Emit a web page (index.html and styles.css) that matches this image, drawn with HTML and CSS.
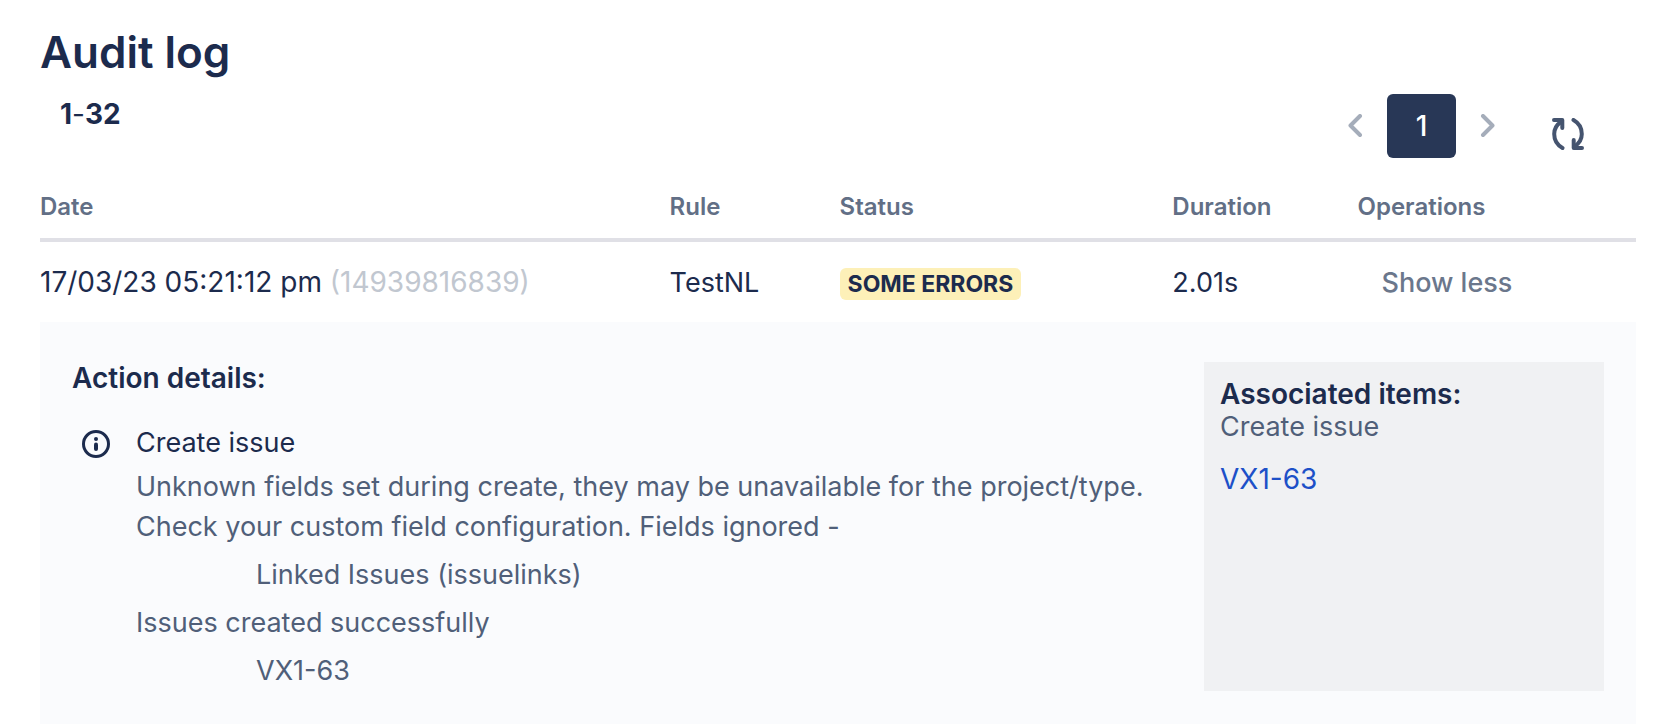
FILE: index.html
```html
<!DOCTYPE html>
<html lang="en">
<head>
  <meta charset="UTF-8">
  <meta name="viewport" content="width=device-width, initial-scale=1">
  <title>Audit log</title>
  <link rel="stylesheet" href="styles.css">
</head>
<body>
  <main class="page">
    <h1>Audit log</h1>

    <div class="toolbar">
      <div class="range"><strong>1</strong>-<strong>32</strong></div>
      <nav class="pager" aria-label="Pagination">
        <button class="arrow" aria-label="Previous page">
          <svg width="16" height="24" viewBox="0 0 16 24"><path d="M13 2 3.500 11.500 13 21"/></svg>
        </button>
        <button class="current">1</button>
        <button class="arrow" aria-label="Next page">
          <svg width="16" height="24" viewBox="0 0 16 24"><path d="M3 2l9.500 9.500L3 21"/></svg>
        </button>
      </nav>
      <button class="refresh" aria-label="Refresh">
        <svg width="32" height="32" viewBox="0 0 32 32">
          <path d="M2 2h8.300v8"/>
          <path d="M9.500 3.500C5 6.500 2.200 11 2.200 16c0 6 3 11 8.300 14"/>
          <path d="M30 30h-8.300v-8"/>
          <path d="M22.500 28.500c4.500-3 7.300-7.500 7.300-12.500 0-6-3-11-8.300-14"/>
        </svg>
      </button>
    </div>

    <table class="log">
      <thead>
        <tr>
          <th class="col-date">Date</th>
          <th class="col-rule">Rule</th>
          <th class="col-status">Status</th>
          <th class="col-duration">Duration</th>
          <th>Operations</th>
        </tr>
      </thead>
      <tbody>
        <tr class="entry">
          <td class="date">17/03/23 05:21:12 pm <span class="entry-id">(14939816839)</span></td>
          <td>TestNL</td>
          <td><span class="badge">SOME ERRORS</span></td>
          <td>2.01s</td>
          <td><button class="toggle">Show less</button></td>
        </tr>
        <tr>
          <td class="details-cell" colspan="5">
            <div class="details">
              <section class="actions">
                <h2>Action details:</h2>
                <div class="action">
                  <svg class="info" width="28" height="28" viewBox="0 0 28 28">
                    <circle cx="14" cy="14" r="12.500"/>
                    <circle class="dot" cx="14" cy="9" r="2"/>
                    <path class="stem" d="M14 14.500v4.500"/>
                  </svg>
                  <div class="action-body">
                    <h3>Create issue</h3>
                    <p>Unknown fields set during create, they may be unavailable for the project/type. Check your custom field configuration. Fields ignored -</p>
                    <p class="nested">Linked Issues (issuelinks)</p>
                    <p>Issues created successfully</p>
                    <p class="nested">VX1-63</p>
                  </div>
                </div>
              </section>
              <aside class="items">
                <h2>Associated items:</h2>
                <p>Create issue</p>
                <a href="#">VX1-63</a>
              </aside>
            </div>
          </td>
        </tr>
      </tbody>
    </table>
  </main>
</body>
</html>
```

FILE: styles.css
```css
* {
  box-sizing: border-box;
}

body {
  margin: 0;
  background: #fff;
  color: #1c2b4d;
  font-family: Inter, "Liberation Sans", sans-serif;
  font-size: 27px;
  line-height: 32px;
}

h1, h2, h3, p {
  margin: 0;
}

button {
  padding: 0;
  border: none;
  background: none;
  font: inherit;
  cursor: pointer;
}

svg {
  display: block;
  fill: none;
  stroke: currentColor;
  stroke-width: 4;
  stroke-linecap: round;
  stroke-linejoin: round;
}

.page {
  padding: 24px 22px 0 40px;
}

h1 {
  margin-bottom: 14px;
  font-size: 44px;
  font-weight: 600;
  line-height: 56px;
}

/* range, pager and refresh */
.toolbar {
  display: flex;
  align-items: flex-start;
  margin-bottom: 16px;
  padding-right: 36px;
}

.range {
  flex: 1;
  padding: 4px 20px;
  font-size: 28px;
}

.pager {
  display: flex;
}

.pager button {
  display: flex;
  align-items: center;
  justify-content: center;
  width: 64px;
  height: 64px;
}

.pager .arrow {
  color: #a5adba;
}

.pager .current {
  width: 69px;
  border-radius: 6px;
  background: #283756;
  color: #fff;
  font-size: 28px;
  font-weight: 500;
}

.refresh {
  display: flex;
  align-items: center;
  justify-content: center;
  width: 64px;
  height: 80px;
  margin-left: 16px;
  color: #45546f;
}

/* log table */
.log {
  width: 100%;
  border-spacing: 0;
  table-layout: fixed;
}

.log th {
  padding: 0 0 14px;
  border-bottom: 4px solid #e0e0e6;
  color: #626f86;
  font-size: 24px;
  font-weight: 600;
  line-height: 34px;
  text-align: left;
}

.col-date {
  width: 39.450%;
}

.col-rule {
  width: 10.650%;
}

.col-status {
  width: 20.850%;
}

.col-duration {
  width: 11.600%;
}

.entry td {
  height: 80px;
  padding: 24px 0 22px;
  vertical-align: baseline;
}

.entry .date {
  font-size: 28px;
}

.entry-id {
  color: #c1c7d0;
}

.badge {
  display: inline-block;
  padding: 0 8px;
  border-radius: 6px;
  background: #fdf0b8;
  font-size: 23px;
  font-weight: 700;
}

.toggle {
  padding-left: 24px;
  color: #6b778c;
  font-weight: 500;
}

/* expanded row */
.log .details-cell {
  padding: 40px 32px 33px;
  background: #fafbfd;
}

.details {
  display: flex;
  gap: 32px;
}

.details h2 {
  font-size: 28px;
  font-weight: 600;
  line-height: 33px;
}

.actions {
  flex: 1;
}

.action {
  display: flex;
  gap: 26px;
  margin-top: 28px;
  padding-left: 10px;
  line-height: 40px;
}

.info {
  flex: none;
  margin-top: 7px;
  stroke-width: 3;
}

.info .dot {
  fill: currentColor;
  stroke: none;
}

.info .stem {
  stroke-width: 4;
}

.action-body {
  display: flex;
  flex-direction: column;
  gap: 8px;
  color: #505f79;
}

.action-body h3 {
  margin-bottom: -4px;
  color: #1c2b4d;
  font-size: 27px;
  font-weight: 400;
}

.nested {
  padding-left: 120px;
}

.items {
  width: 400px;
  padding: 16px;
  background: #f0f1f3;
}

.items p {
  margin-bottom: 20px;
  color: #505f79;
}

.items a {
  color: #1d50c8;
  font-size: 28px;
  text-decoration: none;
}
```
